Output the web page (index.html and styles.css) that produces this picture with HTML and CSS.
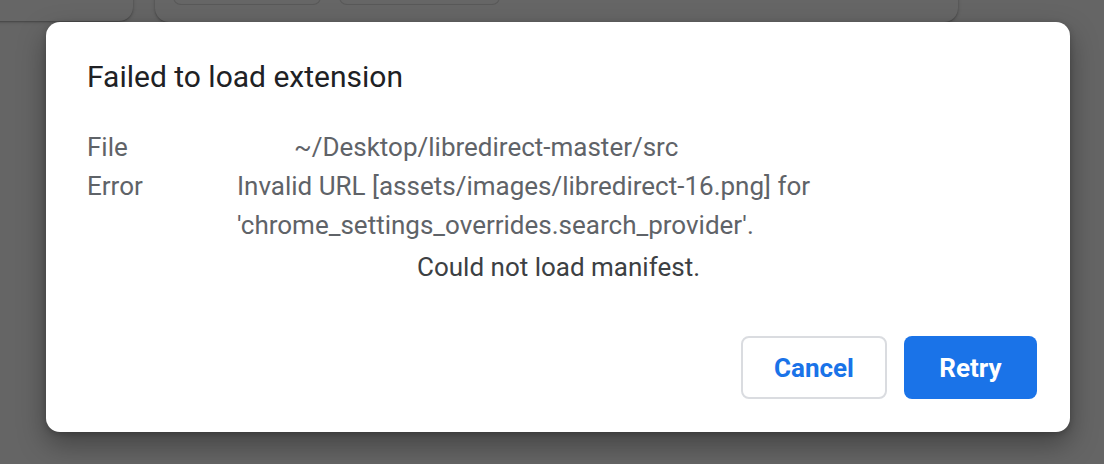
FILE: index.html
```html
<!DOCTYPE html>
<html>
<head>
<meta charset="utf-8">
<link rel="stylesheet" href="styles.css">
</head>
<body>
<div class="backdrop">
  <div class="card card-left"></div>
  <div class="card card-main">
    <div class="ghost-btn ghost-a"></div>
    <div class="ghost-btn ghost-b"></div>
  </div>
</div>
<div class="dialog">
  <h1 class="title">Failed to load extension</h1>
  <div class="details">
    <div class="label">File</div>
    <div class="value file-value">~/Desktop/libredirect-master/src</div>
    <div class="label">Error</div>
    <div class="value error-value">
      <div class="line">Invalid URL [assets/images/libredirect-16.png] for</div>
      <div class="line">'chrome_settings_overrides.search_provider'.</div>
      <div class="line manifest">Could not load manifest.</div>
    </div>
  </div>
  <div class="actions">
    <button class="btn btn-cancel">Cancel</button>
    <button class="btn btn-retry">Retry</button>
  </div>
</div>
</body>
</html>
```
FILE: styles.css
```css
html, body {
  margin: 0;
  padding: 0;
}
body {
  width: 1104px;
  height: 464px;
  background: #656565;
  overflow: hidden;
  position: relative;
  font-family: Roboto, "Liberation Sans", sans-serif;
}
.backdrop {
  display: flex;
  gap: 22px;
  margin-top: -40px;
}
.card {
  background: #666666;
  border-radius: 14px;
  box-shadow: 0 1px 2px rgba(0,0,0,0.25), 0 1px 4px rgba(0,0,0,0.12);
}
.card-left {
  margin-left: -20px;
  width: 153px;
  height: 61px;
}
.card-main {
  width: 803px;
  height: 62px;
  display: flex;
  gap: 18px;
  padding-left: 18px;
  box-sizing: border-box;
}
.ghost-btn {
  height: 45px;
  border: 1.5px solid #595959;
  border-top: none;
  border-radius: 0 0 8px 8px;
  box-sizing: border-box;
}
.ghost-a { width: 148px; }
.ghost-b { width: 161px; }

.dialog {
  position: absolute;
  left: 46px;
  top: 22px;
  width: 1024px;
  height: 410px;
  background: #ffffff;
  border-radius: 14px;
  box-shadow: 0 12px 28px rgba(0,0,0,0.35), 0 2px 6px rgba(0,0,0,0.2);
  box-sizing: border-box;
  padding: 0 33px 33px 41px;
  display: flex;
  flex-direction: column;
}
.title {
  margin: 0;
  padding-top: 38px;
  font-size: 30px;
  font-weight: 400;
  line-height: 34px;
  color: #202124;
}
.details {
  margin-top: 34px;
  display: grid;
  grid-template-columns: 150px 1fr;
  font-size: 26px;
  line-height: 39px;
  color: #5f6368;
}
.file-value {
  padding-left: 57px;
}
.manifest {
  padding-left: 180px;
  color: #3c4043;
  line-height: 44px;
}
.actions {
  margin-top: auto;
  display: flex;
  justify-content: flex-end;
  gap: 17px;
}
.btn {
  height: 63px;
  border-radius: 8px;
  font-family: Roboto, "Liberation Sans", sans-serif;
  font-size: 26px;
  font-weight: 700;
  box-sizing: border-box;
  cursor: pointer;
}
.btn-cancel {
  width: 146px;
  background: #ffffff;
  color: #1a73e8;
  border: 2px solid #dadce0;
}
.btn-retry {
  width: 133px;
  background: #1a73e8;
  color: #ffffff;
  border: none;
}
```
